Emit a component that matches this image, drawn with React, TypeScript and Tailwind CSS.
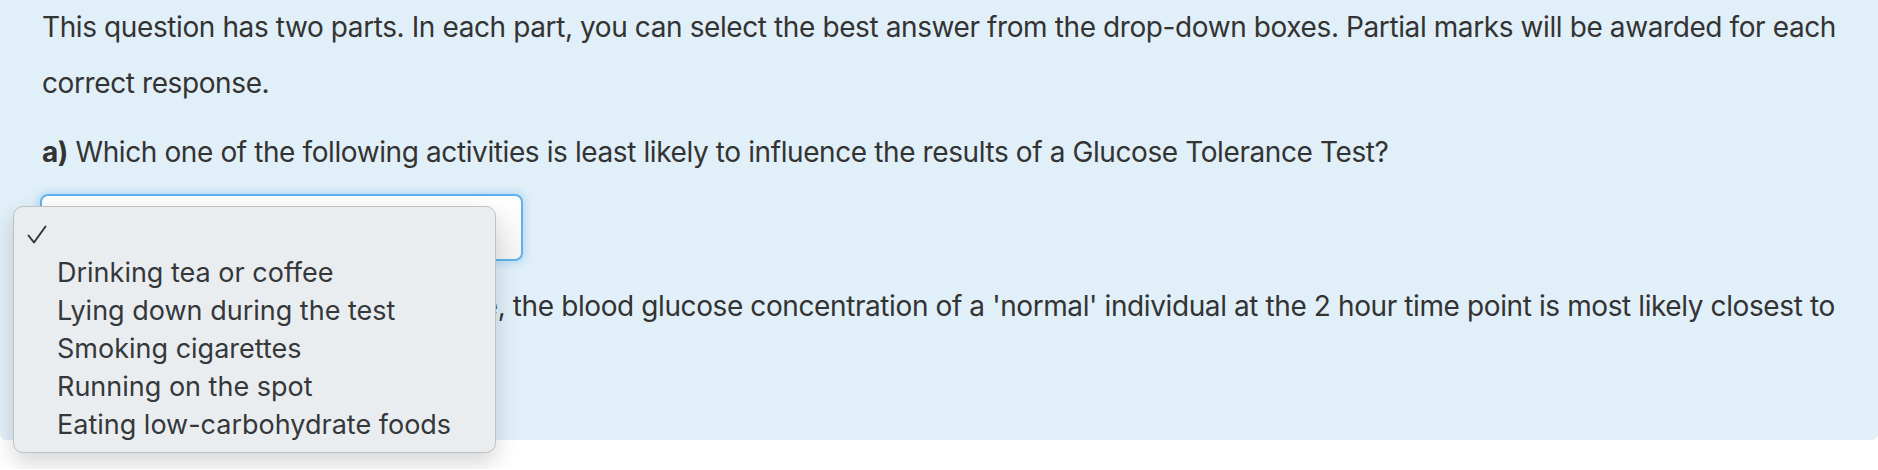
import { useState } from 'react';

const options = [
  '',
  'Drinking tea or coffee',
  'Lying down during the test',
  'Smoking cigarettes',
  'Running on the spot',
  'Eating low-carbohydrate foods',
];

function CheckIcon() {
  return (
    <svg width="20" height="20" viewBox="0 0 20 20" fill="none" className="block">
      <path d="M1.5 10.5 L7 17.5 L18.5 1.5" stroke="#333638" strokeWidth="2" strokeLinecap="round" strokeLinejoin="round" />
    </svg>
  );
}

function SelectMenu({ selected }: { selected: number }) {
  return (
    <div className="absolute left-[-29px] top-[12px] z-10 w-[483px] rounded-[10px] border border-[#bfc2c5] bg-[#eaedf0] pt-[9px] pb-[8px] shadow-[0_10px_22px_rgba(0,0,0,0.16)]">
      {options.map((opt, i) => (
        <div key={i} className="flex h-[38px] items-center text-[27px] leading-[38px] tracking-normal text-[#34383b]">
          <span className="flex w-[43px] shrink-0 pl-[13px]">
            {i === selected && <CheckIcon />}
          </span>
          <span>{opt}</span>
        </div>
      ))}
    </div>
  );
}

export default function App() {
  const [selected] = useState(0);

  return (
    <div className="min-h-screen bg-white font-['Inter',sans-serif] text-[28px] leading-[56px] tracking-[-0.4px] text-[#333333]">
      <div className="h-[441px] rounded-b-[6px] bg-[#e1eff8] pl-[42px] pr-[20px]">
        <p className="-mt-[1px]">
          This question has two parts. In each part, you can select the best answer from the drop-down boxes. Partial marks will be awarded for each correct response.
        </p>
        <p className="mt-[13px]">
          <span className="font-bold">a)</span> Which one of the following activities is least likely to influence the results of a Glucose Tolerance Test?
        </p>
        <div className="relative mt-[14px] w-[481px]">
          <div className="ml-[-2px] h-[67px] rounded-[8px] border-[2.5px] border-[#5eb1ec] bg-gradient-to-b from-[#ffffff] to-[#f3f3f3] shadow-[0_0_6px_3px_rgba(120,190,240,0.35)]" />
          <SelectMenu selected={selected} />
        </div>
        <p className="mt-[17px]">
          <span className="font-bold">b)</span> Based on the chart shown above, the blood glucose concentration of a 'normal' individual at the 2 hour time point is most likely closest to
        </p>
        <div className="mt-[14px] ml-[-2px] h-[60px] w-[300px] rounded-[8px] border border-[#c9ccd0] bg-white" />
      </div>
    </div>
  );
}
